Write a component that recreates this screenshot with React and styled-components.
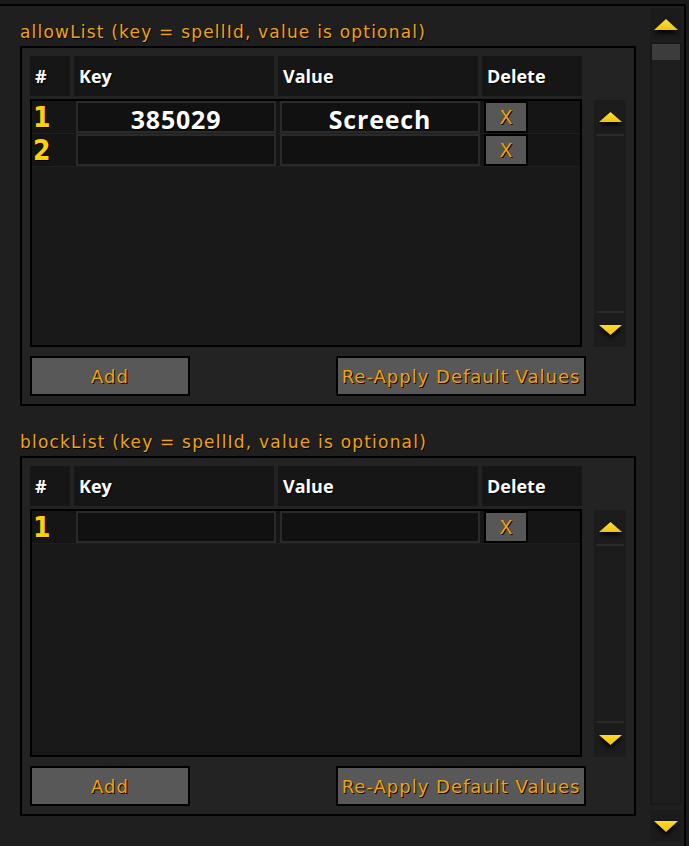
import React from 'react';
import styled, { createGlobalStyle } from 'styled-components';

const Global = createGlobalStyle`
  html, body { margin: 0; padding: 0; background: #1a1a1b; }
  body { width: 689px; height: 846px; overflow: hidden; font-family: "DejaVu Sans", sans-serif; }
  * { box-sizing: border-box; }
`;

const Frame = styled.div`
  margin-top: 4px;
  width: 686px;
  height: 842px;
  border-top: 2px solid #000;
  border-right: 2px solid #000;
  background: #1f1f20;
  display: flex;
`;

const Content = styled.div`
  width: 650px;
  padding: 16px 0 0 20px;
`;

const Title = styled.div`
  font-family: "DejaVu Sans", sans-serif;
  font-size: 17px;
  line-height: 20px;
  letter-spacing: 1.2px;
  color: #f2a20c;
  text-shadow: 1px 1px 0 #000;
  margin-top: ${p => p.$first ? '0' : '26px'};
  margin-bottom: 4px;
  white-space: nowrap;
`;

const Group = styled.div`
  width: 616px;
  border: 2px solid #000;
  background: #232323;
  padding: 8px;
`;

const HeaderRow = styled.div`
  display: flex;
  gap: 4px;
`;

const HeadCell = styled.div`
  width: ${p => p.$w}px;
  height: 40px;
  background: #161616;
  color: #fff;
  font-family: "Open Sans", sans-serif;
  font-weight: 700;
  font-size: 18px;
  padding-left: 5px;
  display: flex;
  align-items: center;
  text-shadow: 1px 1px 1px #000;
`;

const Body = styled.div`
  display: flex;
  gap: 12px;
  margin-top: 3px;
`;

const ListBox = styled.div`
  width: 556px;
  height: 248px;
  border: 2px solid #000;
  background: #191919;
`;

const Row = styled.div`
  display: flex;
  align-items: center;
  gap: 4px;
  height: 33px;
  background: #151515;
  border-bottom: 1px solid #1f1f1f;
`;

const Num = styled.div`
  width: 40px;
  height: 32px;
  padding-left: 1px;
  font-family: "DejaVu Sans Condensed", "DejaVu Sans", sans-serif;
  font-stretch: condensed;
  font-weight: 700;
  font-size: 28px;
  line-height: 32px;
  padding-top: 1px;
  color: #ffd100;
  text-shadow: 1px 1px 0 #000;
`;

const Cell = styled.div`
  width: 200px;
  height: 32px;
  border: 2px solid #2a2a2a;
  background: #111;
  color: #fff;
  font-family: "Open Sans", sans-serif;
  font-weight: 700;
  font-size: 25px;
  letter-spacing: 0.8px;
  line-height: 28px;
  padding-top: 2px;
  text-align: center;
  text-shadow: 1px 1px 1px #000;
`;

const DelBtn = styled.div`
  width: 44px;
  height: 32px;
  border: 2px solid #000;
  background: #575757;
  color: #f5a300;
  font-family: "DejaVu Sans", sans-serif;
  font-size: 19px;
  display: flex;
  align-items: center;
  justify-content: center;
  text-shadow: 1px 1px 0 #000;
`;

const InnerScroll = styled.div`
  width: 32px;
  height: 247px;
  margin-top: 1px;
  background: #1c1c1c;
  display: flex;
  flex-direction: column;
`;

const ArrowBtn = styled.div`
  height: ${p => p.$h}px;
  display: flex;
  align-items: center;
  justify-content: center;
  background: #1c1c1c;
`;

const Sep = styled.div`
  height: 2px;
  margin: 0 2px;
  background: #2a2a2a;
`;

const Track = styled.div`
  flex: 1;
`;

const ButtonRow = styled.div`
  display: flex;
  justify-content: space-between;
  width: 556px;
  margin-top: 9px;
`;

const Btn = styled.div`
  width: ${p => p.$w}px;
  height: 40px;
  border: 2px solid #000;
  background: #585858;
  color: #f5a300;
  font-family: "DejaVu Sans", sans-serif;
  font-size: 18px;
  letter-spacing: 1px;
  display: flex;
  align-items: center;
  justify-content: center;
  text-shadow: 1px 1px 0 #000;
  white-space: nowrap;
`;

const MainScroll = styled.div`
  width: 32px;
  margin-top: 2px;
  display: flex;
  flex-direction: column;
`;

const MainBtn = styled.div`
  height: 32px;
  background: #1b1b1b;
  display: flex;
  align-items: center;
  justify-content: center;
`;

const MainTrack = styled.div`
  height: 763px;
  margin: 2px 0 5px;
  border: 2px solid #181818;
  background: #1e1e1e;
`;

const Thumb = styled.div`
  height: 16px;
  background: #3c3c3c;
`;

const ArrowSvg = styled.svg`
  display: block;
  overflow: visible;
  filter: drop-shadow(0 3px 2px rgba(0, 0, 0, 0.95));
`;

function Arrow({ down, w = 23, h = 10 }) {
  return (
    <ArrowSvg width={w} height={h} viewBox={`0 0 ${w} ${h}`}>
      <defs>
        <linearGradient id={down ? 'gd' : 'gu'} x1="0" y1="0" x2="0" y2="1">
          <stop offset="0" stopColor={down ? '#ffd92a' : '#ffe13a'} />
          <stop offset="1" stopColor={down ? '#f3c40e' : '#f0c20c'} />
        </linearGradient>
      </defs>
      <polygon
        points={down ? `0,0 ${w},0 ${w / 2},${h}` : `${w / 2},0 ${w},${h} 0,${h}`}
        fill={`url(#${down ? 'gd' : 'gu'})`}
      />
    </ArrowSvg>
  );
}

function ListSection({ title, rows, first }) {
  return (
    <>
      <Title $first={first}>{title}</Title>
      <Group>
        <HeaderRow>
          <HeadCell $w={40}>#</HeadCell>
          <HeadCell $w={200}>Key</HeadCell>
          <HeadCell $w={200}>Value</HeadCell>
          <HeadCell $w={100}>Delete</HeadCell>
        </HeaderRow>
        <Body>
          <ListBox>
            {rows.map((r, i) => (
              <Row key={i}>
                <Num>{i + 1}</Num>
                <Cell>{r.key}</Cell>
                <Cell>{r.value}</Cell>
                <DelBtn>X</DelBtn>
              </Row>
            ))}
          </ListBox>
          <InnerScroll>
            <ArrowBtn $h={34}><Arrow /></ArrowBtn>
            <Sep />
            <Track />
            <Sep />
            <ArrowBtn $h={34}><Arrow down /></ArrowBtn>
          </InnerScroll>
        </Body>
        <ButtonRow>
          <Btn $w={160}>Add</Btn>
          <Btn $w={250}>Re-Apply Default Values</Btn>
        </ButtonRow>
      </Group>
    </>
  );
}

export default function App() {
  return (
    <>
      <Global />
      <Frame>
        <Content>
          <ListSection
            first
            title="allowList (key = spellId, value is optional)"
            rows={[{ key: '385029', value: 'Screech' }, { key: '', value: '' }]}
          />
          <ListSection
            title="blockList (key = spellId, value is optional)"
            rows={[{ key: '', value: '' }]}
          />
        </Content>
        <MainScroll>
          <MainBtn><Arrow w={24} h={11} /></MainBtn>
          <MainTrack><Thumb /></MainTrack>
          <MainBtn><Arrow down w={24} h={11} /></MainBtn>
        </MainScroll>
      </Frame>
    </>
  );
}
